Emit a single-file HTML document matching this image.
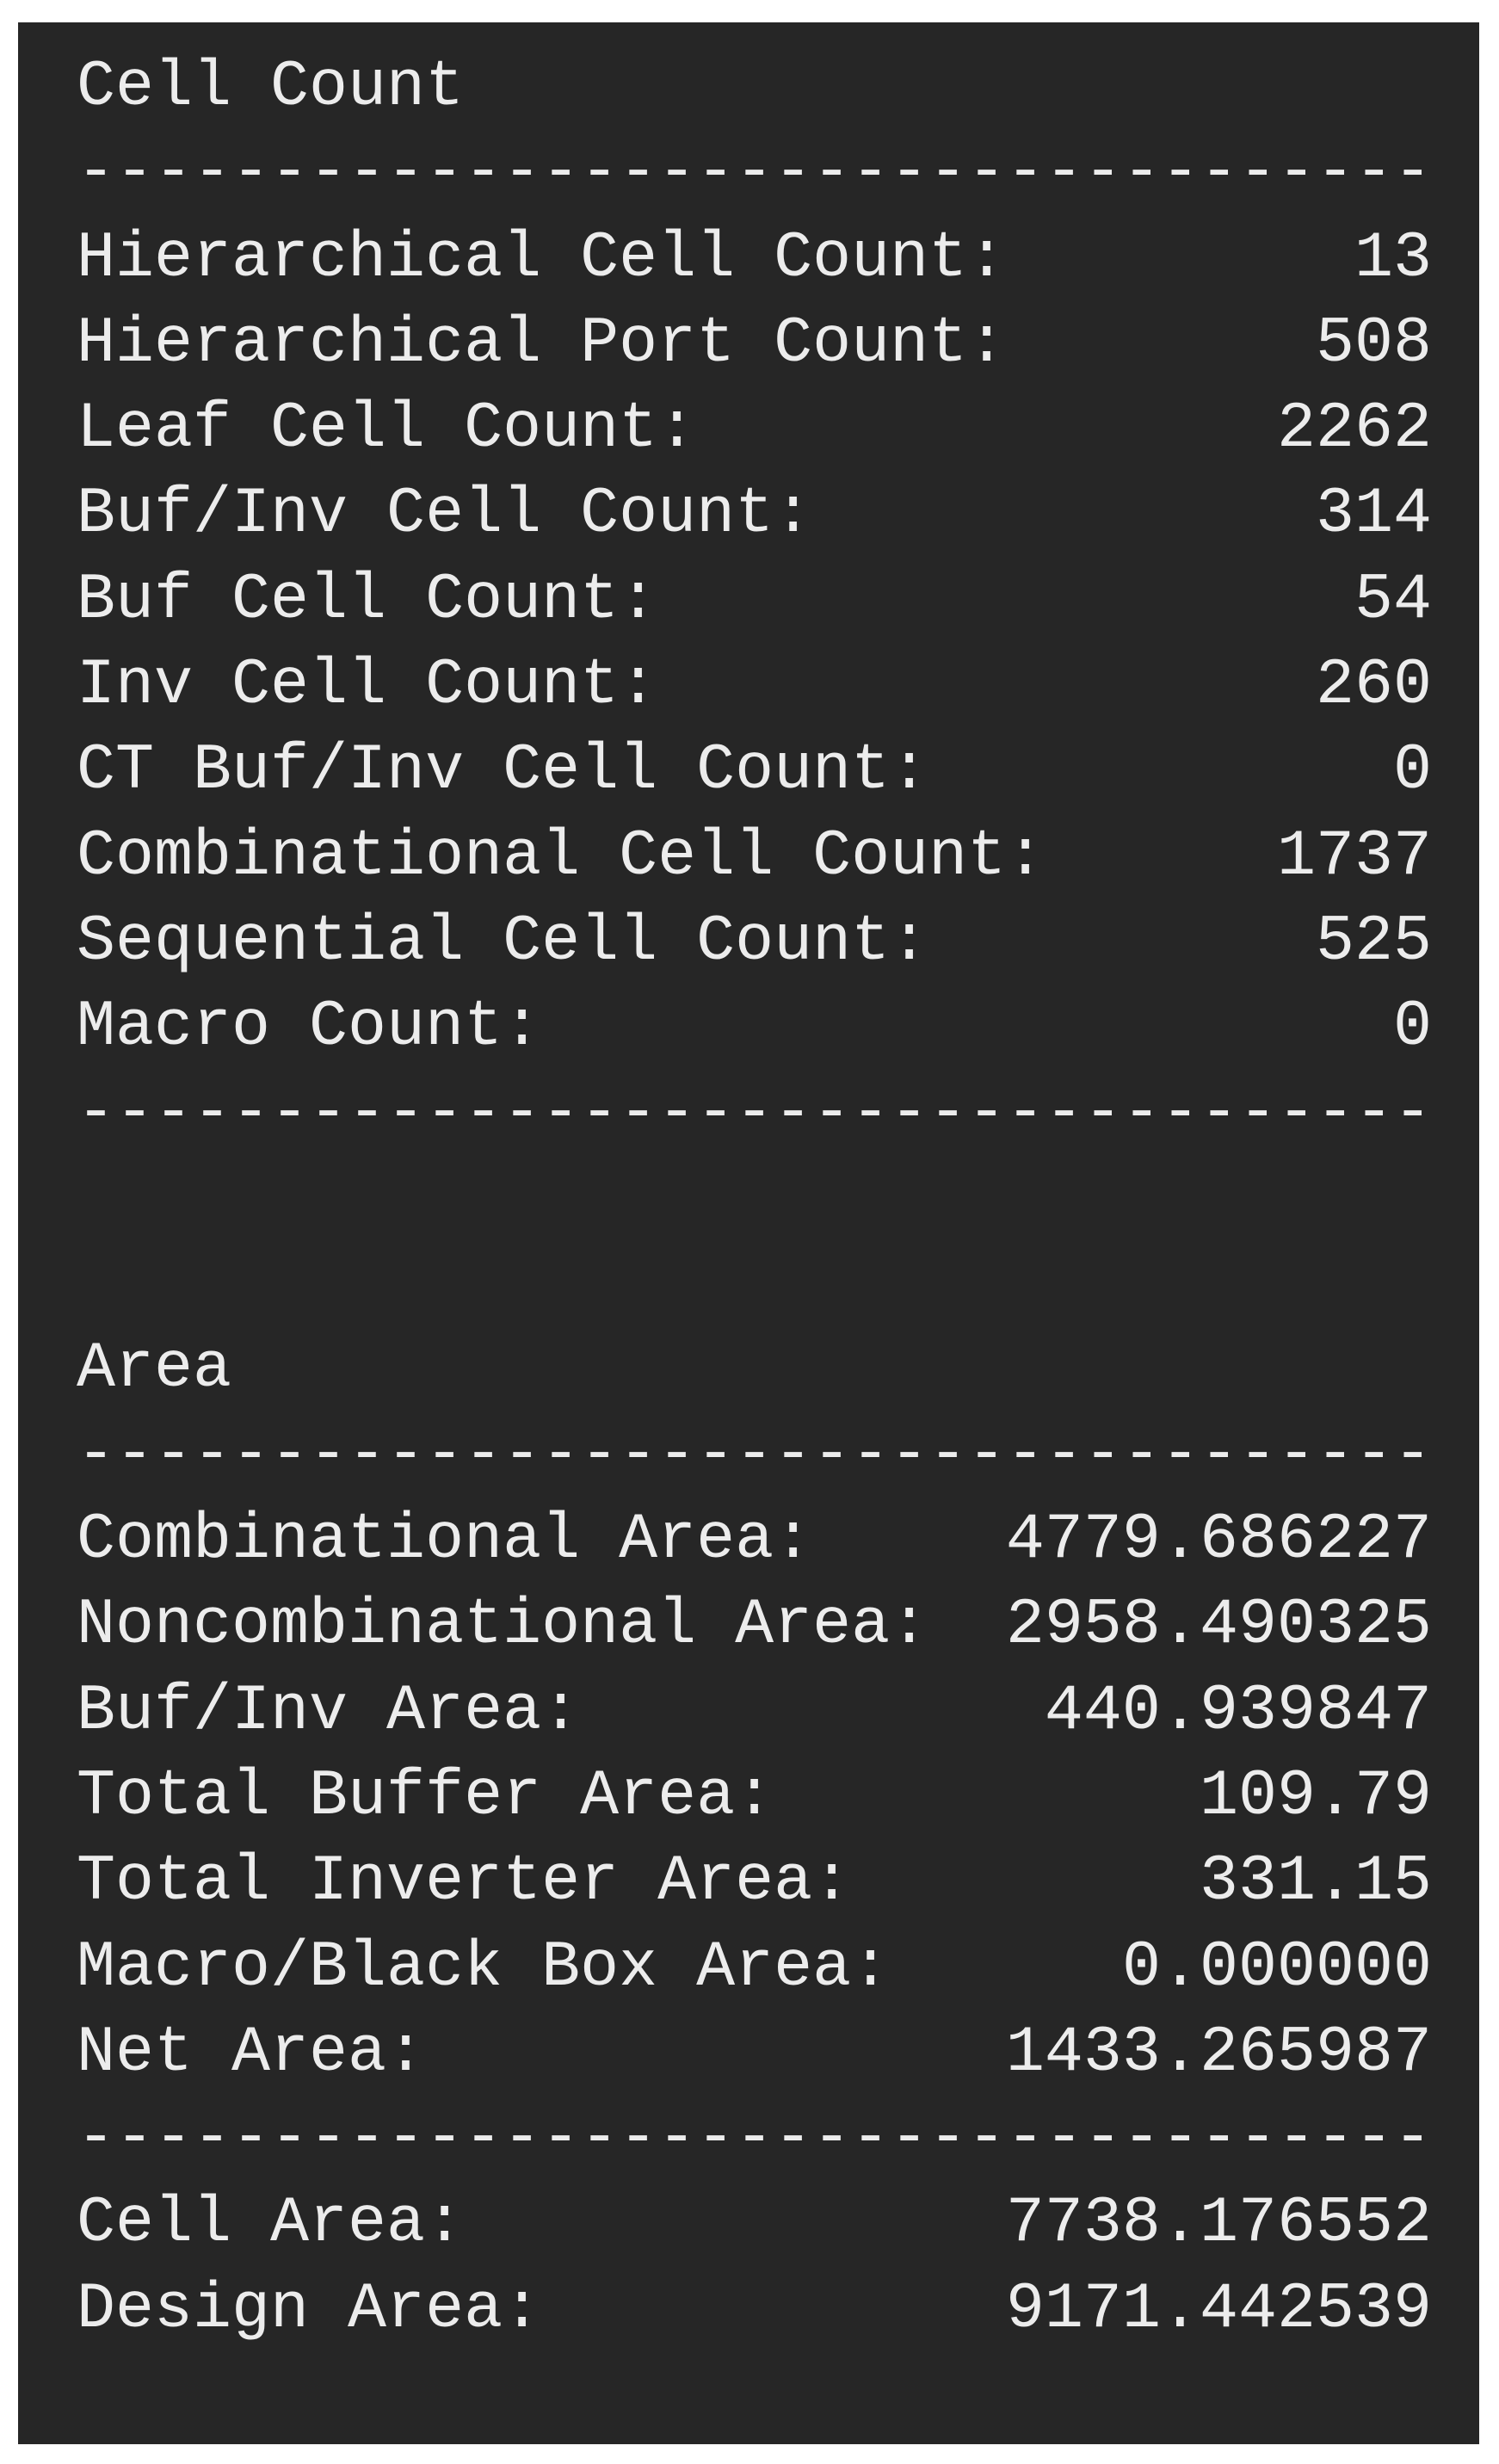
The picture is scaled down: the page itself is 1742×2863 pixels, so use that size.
<!DOCTYPE html>
<html><head><meta charset="utf-8"><style>
html,body{margin:0;padding:0;background:#fff;}
body{width:1742px;height:2863px;position:relative;overflow:hidden;}
.box{position:absolute;left:21px;top:26px;width:1698px;height:2814px;background:#262626;}
.t{position:absolute;left:89px;top:52px;font-family:"Liberation Mono",monospace;font-size:75px;line-height:99.3px;color:#ececec;}
.t span{white-space:pre;}
.r{display:flex;justify-content:space-between;width:1575px;height:99.3px;overflow:hidden;}
</style></head><body>
<div class="box"></div>
<div class="t"><div class="r"><span>Cell Count</span></div><div class="r"><span>-----------------------------------</span></div><div class="r"><span>Hierarchical Cell Count:</span><span>13</span></div><div class="r"><span>Hierarchical Port Count:</span><span>508</span></div><div class="r"><span>Leaf Cell Count:</span><span>2262</span></div><div class="r"><span>Buf/Inv Cell Count:</span><span>314</span></div><div class="r"><span>Buf Cell Count:</span><span>54</span></div><div class="r"><span>Inv Cell Count:</span><span>260</span></div><div class="r"><span>CT Buf/Inv Cell Count:</span><span>0</span></div><div class="r"><span>Combinational Cell Count:</span><span>1737</span></div><div class="r"><span>Sequential Cell Count:</span><span>525</span></div><div class="r"><span>Macro Count:</span><span>0</span></div><div class="r"><span>-----------------------------------</span></div><div class="r"></div><div class="r"></div><div class="r"><span>Area</span></div><div class="r"><span>-----------------------------------</span></div><div class="r"><span>Combinational Area:</span><span>4779.686227</span></div><div class="r"><span>Noncombinational Area:</span><span>2958.490325</span></div><div class="r"><span>Buf/Inv Area:</span><span>440.939847</span></div><div class="r"><span>Total Buffer Area:</span><span>109.79</span></div><div class="r"><span>Total Inverter Area:</span><span>331.15</span></div><div class="r"><span>Macro/Black Box Area:</span><span>0.000000</span></div><div class="r"><span>Net Area:</span><span>1433.265987</span></div><div class="r"><span>-----------------------------------</span></div><div class="r"><span>Cell Area:</span><span>7738.176552</span></div><div class="r"><span>Design Area:</span><span>9171.442539</span></div></div>
</body></html>
